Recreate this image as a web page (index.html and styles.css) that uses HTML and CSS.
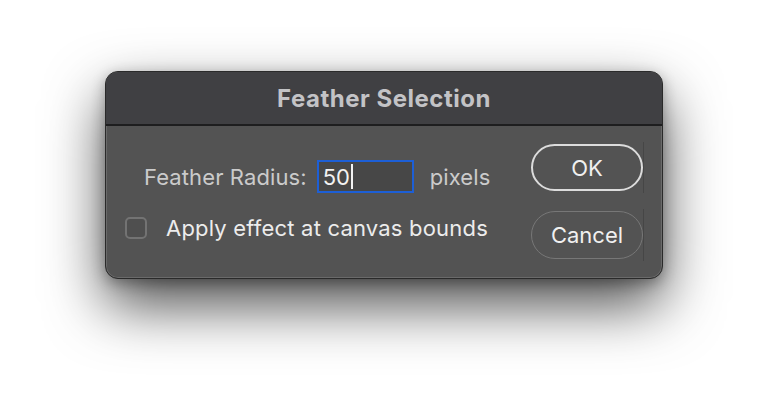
FILE: index.html
```html
<!DOCTYPE html>
<html>
<head>
<meta charset="utf-8">
<link rel="stylesheet" href="styles.css">
</head>
<body>
<div class="dialog">
  <div class="titlebar">Feather Selection</div>
  <div class="content">
    <div class="form">
      <div class="row radius-row">
        <label class="label" for="radius">Feather Radius:</label>
        <div class="field"><span class="value">50</span><span class="caret"></span></div>
        <span class="unit">pixels</span>
      </div>
      <div class="row check-row">
        <span class="checkbox"></span>
        <span class="check-label">Apply effect at canvas bounds</span>
      </div>
    </div>
    <div class="buttons">
      <div class="slot"><button class="btn btn-ok">OK</button></div>
      <div class="slot"><button class="btn btn-cancel">Cancel</button></div>
    </div>
  </div>
</div>
</body>
</html>
```
FILE: styles.css
```css
html, body {
  margin: 0;
  padding: 0;
}
body {
  width: 768px;
  height: 419px;
  background: #ffffff;
  font-family: Inter, "Noto Sans", "Liberation Sans", sans-serif;
  padding: 71px 0 0 105px;
  box-sizing: border-box;
  overflow: hidden;
}
.dialog {
  width: 558px;
  height: 208px;
  box-sizing: border-box;
  border-radius: 13px;
  background: #535353;
  border: 1px solid #2a2a2a;
  box-shadow: inset 0 0 0 1px #6a6a6a, 0 26px 58px rgba(0, 0, 0, 0.7), 0 4px 14px rgba(0,0,0,0.3);
  overflow: hidden;
  display: flex;
  flex-direction: column;
}
.titlebar {
  flex: none;
  height: 54px;
  box-sizing: border-box;
  background: #404043;
  border-bottom: 2px solid #1e1e1f;
  color: #c3c3c6;
  font-weight: 700;
  font-size: 24px;
  letter-spacing: 0.5px;
  display: flex;
  align-items: center;
  justify-content: center;
}
.content {
  flex: 1;
  display: flex;
  justify-content: space-between;
  padding: 19px 19px 0 19px;
}
.form {
  display: flex;
  flex-direction: column;
}
.row {
  display: flex;
  align-items: center;
}
.radius-row {
  margin-top: 15px;
  margin-left: 19px;
  height: 33px;
}
.label {
  color: #cbcbcb;
  font-size: 22px;
  letter-spacing: 0.1px;
  margin-right: 10px;
}
.field {
  width: 97px;
  height: 33px;
  box-sizing: border-box;
  border: 2px solid #1d5fd6;
  background: #474747;
  display: flex;
  align-items: center;
  padding-left: 4px;
}
.value {
  color: #f2f2f2;
  font-size: 22px;
}
.caret {
  width: 2px;
  height: 25px;
  background: #f2f2f2;
  margin-left: 1px;
}
.unit {
  color: #cbcbcb;
  font-size: 22px;
  letter-spacing: 0.1px;
  margin-left: 16px;
}
.check-row {
  margin-top: 22px;
}
.checkbox {
  width: 22px;
  height: 22px;
  box-sizing: border-box;
  border: 2px solid #737373;
  border-radius: 5px;
  background: #4f4f4f;
  margin-right: 19px;
}
.check-label {
  color: #ececec;
  font-size: 22px;
  letter-spacing: 0.2px;
}
.buttons {
  display: flex;
  flex-direction: column;
  gap: 16px;
  margin-top: -3px;
}
.slot {
  border-right: 1px solid #464646;
  padding: 2px 0 2px 0;
  margin-right: -1px;
}
.btn {
  display: block;
  width: 112px;
  height: 48px;
  border-radius: 24px;
  background: transparent;
  font-family: inherit;
  font-size: 22px;
  color: #f0f0f0;
  cursor: default;
  padding: 0;
}
.btn-ok {
  border: 2px solid #dcdcdc;
  height: 47px;
}
.btn-cancel {
  border: 1.5px solid #777777;
}
```
